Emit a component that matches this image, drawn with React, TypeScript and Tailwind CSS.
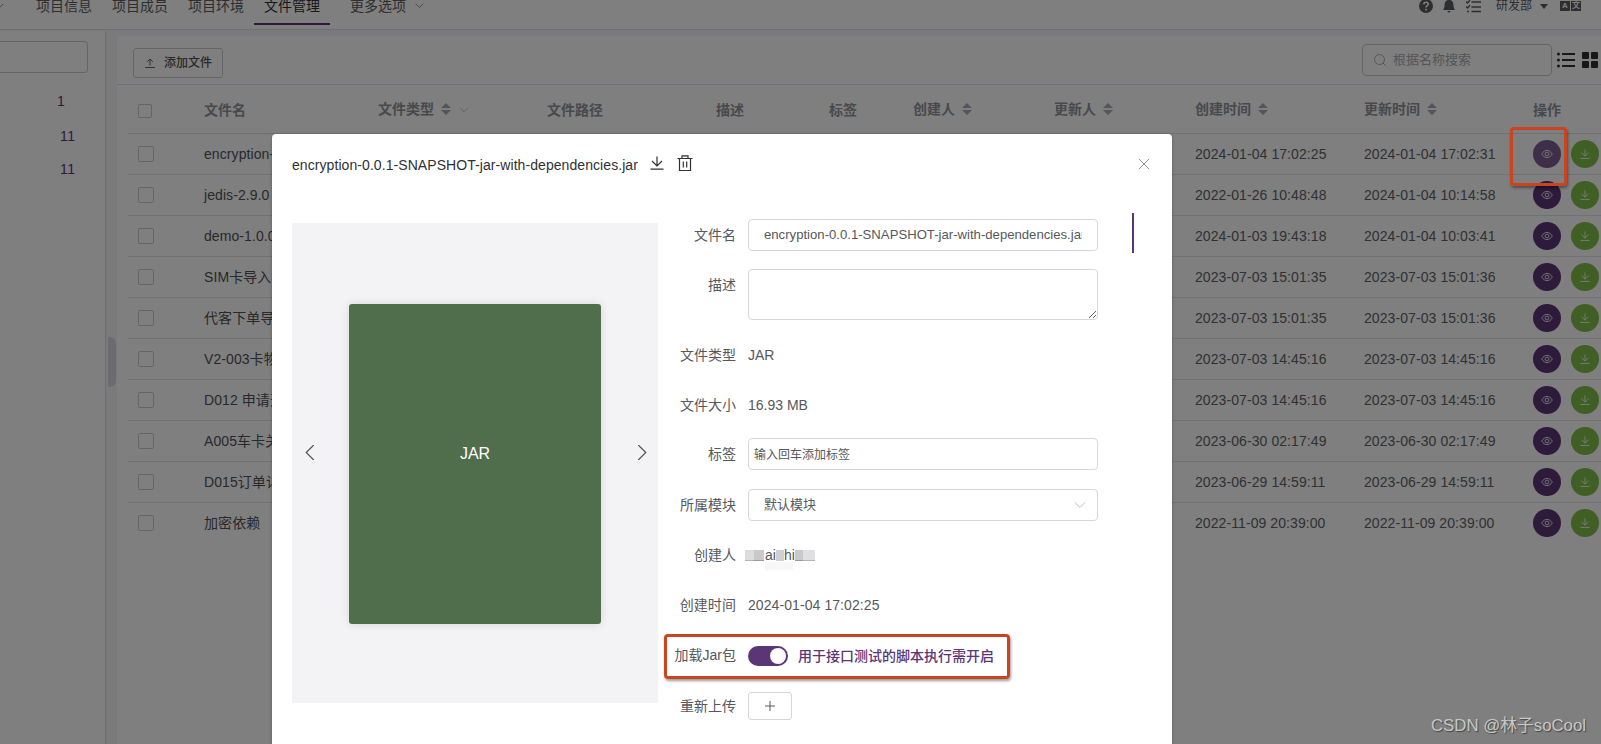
import { useState } from 'react';
import clsx from 'clsx';

const files = [
  { name: 'encryption-0.0.1', created: '2024-01-04 17:02:25', updated: '2024-01-04 17:02:31' },
  { name: 'jedis-2.9.0', created: '2022-01-26 10:48:48', updated: '2024-01-04 10:14:58' },
  { name: 'demo-1.0.0.jar', created: '2024-01-03 19:43:18', updated: '2024-01-04 10:03:41' },
  { name: 'SIM卡导入模板', created: '2023-07-03 15:01:35', updated: '2023-07-03 15:01:36' },
  { name: '代客下单导入', created: '2023-07-03 15:01:35', updated: '2023-07-03 15:01:36' },
  { name: 'V2-003卡物料', created: '2023-07-03 14:45:16', updated: '2023-07-03 14:45:16' },
  { name: 'D012 申请开卡', created: '2023-07-03 14:45:16', updated: '2023-07-03 14:45:16' },
  { name: 'A005车卡关联', created: '2023-06-30 02:17:49', updated: '2023-06-30 02:17:49' },
  { name: 'D015订单详情', created: '2023-06-29 14:59:11', updated: '2023-06-29 14:59:11' },
  { name: '加密依赖', created: '2022-11-09 20:39:00', updated: '2022-11-09 20:39:00' },
];

const columns = [
  { title: '文件名' },
  { title: '文件类型', sort: true, filter: true },
  { title: '文件路径' },
  { title: '描述' },
  { title: '标签' },
  { title: '创建人', sort: true },
  { title: '更新人', sort: true },
  { title: '创建时间', sort: true },
  { title: '更新时间', sort: true },
  { title: '操作' },
];

const gridCols = 'grid grid-cols-[76px_174px_169px_169px_113px_84px_141px_141px_169px_169px_68px] items-center';

function Chevron({ className, dir = 'down' }: { className?: string; dir?: 'down' | 'left' | 'right' }) {
  const d = { down: 'M1 4l6 6 6-6', left: 'M10 0L3 7l7 7', right: 'M4 0l7 7-7 7' }[dir];
  return (
    <svg viewBox="0 0 14 14" className={className} fill="none" stroke="currentColor" strokeWidth="1.1">
      <path d={d} />
    </svg>
  );
}

function DownloadIcon({ className }: { className?: string }) {
  return (
    <svg viewBox="0 0 14 14" className={className} fill="none" stroke="currentColor" strokeWidth="1.2">
      <path d="M7 0.5v9.2M2 5l5 5 5-5M0.5 13.2h13" />
    </svg>
  );
}

function EyeIcon() {
  return (
    <svg viewBox="0 0 14 10" className="h-2.5 w-3" fill="none" stroke="currentColor">
      <path d="M0.8 5C2.6 2.2 4.6 0.8 7 0.8S11.4 2.2 13.2 5C11.4 7.8 9.4 9.2 7 9.2S2.6 7.8 0.8 5z" />
      <circle cx="7" cy="5" r="2.2" />
    </svg>
  );
}

function SortCaret() {
  return (
    <svg viewBox="0 0 10 12" className="ml-[7px] h-3 w-2.5 text-[#a8abb4]" fill="currentColor">
      <path d="M5 0l5 5H0zM5 12l5-5H0z" />
    </svg>
  );
}

function NavBar() {
  const tabs = ['项目信息', '项目成员', '项目环境', '文件管理'];
  return (
    <div className="relative flex h-[30px] shrink-0 border-b border-[#dcdfe6] bg-white text-sm text-[#5a5c60]">
      <Chevron className="absolute -left-1.5 top-px h-2.5 w-2.5 text-[#707278]" />
      <div className="flex pl-[26px]">
        {tabs.map((tab) => (
          <div
            key={tab}
            className={clsx(
              'h-[25px] w-[76px] text-center leading-[13px]',
              tab === '文件管理' && 'border-b-2 border-[#5c3577] text-[#303133]'
            )}
          >
            {tab}
          </div>
        ))}
        <div className="ml-5 leading-[13px]">更多选项</div>
        <Chevron className="ml-[9px] mt-px h-[9px] w-[9px] text-[#707278]" />
      </div>
      <div className="ml-auto flex h-3 items-center pr-5 text-[#5a5c60]">
        <svg viewBox="0 0 14 14" className="h-3.5 w-3.5">
          <circle cx="7" cy="7" r="7" fill="currentColor" />
          <path d="M4.8 5.4C4.9 2.4 9.4 2.6 9.2 5.2 9.1 6.6 7 6.8 7 8.5M7 9.7v1.7" fill="none" stroke="#fff" strokeWidth="1.6" />
        </svg>
        <svg viewBox="0 0 12 14" className="ml-2.5 h-3.5 w-3" fill="currentColor">
          <path d="M6 0a1 1 0 011 1c2 .5 3.4 2 3.4 4.5 0 2.8.6 4 1.6 5.5H0C1 9.5 1.6 8.3 1.6 5.5 1.6 3 3 1.5 5 1a1 1 0 011-1zM4.5 12h3a1.5 1.5 0 01-3 0z" />
        </svg>
        <svg viewBox="0 0 15 13" className="ml-[11px] h-[13px] w-[15px]" fill="none" stroke="currentColor" strokeWidth="1.5">
          <path d="M5.5 2H15M5.5 7H15M5.5 11.5H15M0 1.5L1.5 3 4 0.3M0 6.5L1.5 8 4 5.3M1 11.5h2" />
        </svg>
        <span className="ml-[15px] text-xs">研发部</span>
        <svg viewBox="0 0 8 5" className="ml-2 h-[5px] w-2" fill="currentColor">
          <path d="M0 0h8L4 5z" />
        </svg>
        <div className="ml-3 flex gap-px text-[8px] font-bold leading-[10px] text-white">
          <span className="w-[10px] bg-[#5a5c60] text-center">A</span>
          <span className="w-[10px] bg-[#5a5c60] text-center">文</span>
        </div>
      </div>
    </div>
  );
}

function Sidebar() {
  return (
    <div className="mt-px w-[106px] shrink-0 border-r border-[#dcdfe6] bg-white">
      <div className="mt-2.5 h-8 w-[88px] rounded-r border border-l-0 border-[#c8cbd2]" />
      <div className="flex flex-col text-sm text-[#5c3577]">
        <span className="mt-[18px] pl-[57px]">1</span>
        <span className="mt-[15px] pl-[60px] tracking-[0.5px]">11</span>
        <span className="mt-[13px] pl-[60px] tracking-[0.5px]">11</span>
      </div>
    </div>
  );
}

function FileTable() {
  return (
    <div className="ml-[11px]">
      <div className={clsx(gridCols, 'h-[49px] border-b border-[#dfe2ea] text-sm font-bold text-[#909399]')}>
        <span className="ml-2.5 mt-1 h-3.5 w-3.5 rounded-[2px] border border-[#c8cbd2]" />
        {columns.map((col) => (
          <div key={col.title} className={clsx('flex items-center whitespace-nowrap', !col.sort && 'pt-0.5')}>
            {col.title}
            {col.sort && <SortCaret />}
            {col.filter && <Chevron className="ml-[9px] mt-0.5 h-2 w-2" />}
          </div>
        ))}
      </div>
      {files.map((file, index) => (
        <div
          key={index}
          className={clsx(
            gridCols,
            'h-[41px] border-b text-sm tracking-[0.08px] text-[#606266]',
            index < files.length - 1 ? 'border-[#e2e4ea]' : 'border-transparent'
          )}
        >
          <span className="ml-2.5 h-4 w-4 rounded-[2px] border border-[#c8cbd2]" />
          <span className="col-span-7 whitespace-nowrap text-[#505256]">{file.name}</span>
          <span className="whitespace-nowrap">{file.created}</span>
          <span className="whitespace-nowrap">{file.updated}</span>
          <div className="flex gap-2.5 text-white">
            <button
              className={clsx(
                'flex h-7 w-7 shrink-0 items-center justify-center rounded-full',
                index === 0 ? 'bg-[#7d5d92]' : 'bg-[#5c3577]'
              )}
            >
              <EyeIcon />
            </button>
            <button className="flex h-7 w-7 shrink-0 items-center justify-center rounded-full bg-[#7ebe48]">
              <DownloadIcon className="h-2.5 w-2.5" />
            </button>
          </div>
        </div>
      ))}
    </div>
  );
}

function FilePanel() {
  return (
    <div className="mt-1.5 w-[1484px] shrink-0 rounded-tl bg-white">
      <div className="flex h-[49px] items-center border-b border-[#dcdfee] pl-4">
        <button className="mt-1.5 flex h-[30px] w-[90px] items-center rounded-[3px] border border-[#c8cbd2] pl-[11px] text-xs text-[#505256]">
          <svg viewBox="0 0 10 10" className="mr-[9px] h-2.5 w-2.5" fill="none" stroke="currentColor" strokeWidth="0.9">
            <path d="M5 7.5V1M2.2 3.800L5 1l2.800 2.800M0 9.500h10" />
          </svg>
          <span className="font-medium">添加文件</span>
        </button>
        <div className="ml-auto mr-[5px] flex h-8 w-[190px] items-center rounded border border-[#c8cbd2] pl-[11px] text-[13px] text-[#a8abb2]">
          <svg viewBox="0 0 12 12" className="mr-[7px] h-3 w-3" fill="none" stroke="currentColor">
            <circle cx="5.5" cy="5.5" r="5" />
            <path d="M9 9l2.5 2.5" />
          </svg>
          根据名称搜索
        </div>
        <svg viewBox="0 0 18 16" className="h-4 w-[18px] text-[#303133]" fill="currentColor">
          <path d="M5 1h13v2H5zM5 7h13v2H5zM5 13h13v2H5z" />
          <circle cx="1.5" cy="2" r="1.5" />
          <circle cx="1.5" cy="8" r="1.5" />
          <circle cx="1.5" cy="14" r="1.5" />
        </svg>
        <div className="ml-[7px] mr-[3px] grid grid-cols-2 gap-0.5">
          {[0, 1, 2, 3].map((i) => (
            <span key={i} className="h-[7px] w-[7px] rounded-[1px] bg-[#303133]" />
          ))}
        </div>
      </div>
      <FileTable />
    </div>
  );
}

function FormRow({ label, className, children }: { label: string; className?: string; children: React.ReactNode }) {
  return (
    <div className={clsx('flex', className)}>
      <span className="w-[90px] shrink-0 pr-3 text-right leading-8">{label}</span>
      <div className="leading-8">{children}</div>
    </div>
  );
}

// 打码后的创建人
function MaskedName() {
  return (
    <div className="relative -ml-[3px] flex h-[11px] items-end text-sm leading-[11px]">
      <span className="h-[11px] w-[9px] border-b border-[#b4b4b8] bg-[#dcdcdf]" />
      <span className="h-[11px] w-2.5 border-b border-[#9a9a9e] bg-[#c9c9cc]" />
      <span className="pl-px">ai</span>
      <span className="h-[11px] w-2 bg-[#cfd0d4]" />
      <span>hi</span>
      <span className="h-[11px] w-2 border-b border-[#9a9a9e] bg-[#c9c9cc]" />
      <span className="h-[11px] w-3 border-b border-[#b4b4b8] bg-[#e0e0e3]" />
      <span className="absolute left-5 top-3 h-2 w-7 bg-[#f7f7f8]" />
    </div>
  );
}

function FileDialog() {
  const [loadJar, setLoadJar] = useState(true);
  return (
    <div className="absolute left-[272px] top-[134px] h-[620px] w-[900px] rounded-sm bg-white px-5 shadow-[0_1px_3px_rgba(0,0,0,0.3)]">
      <div className="flex h-[62px] items-center text-sm text-[#303133]">
        <span className="tracking-[0.07px]">encryption-0.0.1-SNAPSHOT-jar-with-dependencies.jar</span>
        <DownloadIcon className="mb-1 ml-3 h-3.5 w-3.5" />
        <svg viewBox="0 0 16 16" className="mb-1 ml-[13px] h-4 w-4" fill="none" stroke="currentColor" strokeWidth="1.2">
          <path d="M0.5 3.5h15M2.5 3.5v12h11v-12M5 3V0.8h6V3M6.3 6.5v6M9.700 6.500v6" />
        </svg>
        <svg viewBox="0 0 10 10" className="mb-[3px] ml-auto mr-[3px] h-2.5 w-2.5 text-[#909399]" fill="none" stroke="currentColor">
          <path d="M0 0l10 10M10 0L0 10" />
        </svg>
      </div>

      <div className="flex">
        {/* 预览 */}
        <div className="mt-[27px] flex h-[480px] w-[366px] shrink-0 items-center justify-between bg-[#f3f3f6] pl-[11px] pr-[9px] text-[#505256]">
          <Chevron dir="left" className="-mt-[22px] h-[15px] w-[15px]" />
          <div className="-ml-0.5 mt-0.5 flex h-80 w-[252px] items-center justify-center rounded-[3px] bg-[#506e4c] pb-[21px] text-white shadow-[0_0_10px_rgba(0,0,0,0.12)]">
            JAR
          </div>
          <Chevron dir="right" className="-mt-[22px] h-[15px] w-[15px]" />
        </div>

        {/* 基本信息 */}
        <div className="mt-[23px] flex w-[440px] shrink-0 flex-col text-sm text-[#56585c]">
          <FormRow label="文件名" className="h-8">
            <div className="flex h-8 w-[350px] items-center rounded border border-[#d5d6e0] px-[15px] text-[13.15px]">
              <span className="overflow-hidden whitespace-nowrap">encryption-0.0.1-SNAPSHOT-jar-with-dependencies.jar</span>
            </div>
          </FormRow>
          <FormRow label="描述" className="mt-[18px] h-[51px]">
            <textarea className="block h-[51px] w-[350px] rounded border border-[#d5d6e0]" />
          </FormRow>
          <FormRow label="文件类型" className="mt-[19px] h-8">JAR</FormRow>
          <FormRow label="文件大小" className="mt-[18px] h-8">16.93 MB</FormRow>
          <FormRow label="标签" className="mt-[17px] h-8">
            <div className="flex h-8 w-[350px] items-center rounded border border-[#d5d6e0] px-[5px] pt-px text-xs">输入回车添加标签</div>
          </FormRow>
          <FormRow label="所属模块" className="mt-[19px] h-8">
            <div className="flex h-8 w-[350px] items-center justify-between rounded border border-[#d5d6e0] pl-[15px] pr-[11px] text-[13px]">
              默认模块
              <Chevron className="h-3 w-3 text-[#b8bac4]" />
            </div>
          </FormRow>
          <FormRow label="创建人" className="mt-[18px] h-8">
            <div className="flex h-8 items-center">
              <MaskedName />
            </div>
          </FormRow>
          <FormRow label="创建时间" className="mt-[18px] h-8 tracking-[0.08px]">2024-01-04 17:02:25</FormRow>
          <div className="relative mt-[18px] h-[34px]">
            <FormRow label="加载Jar包">
              <div className="flex h-[34px] items-center">
                <button
                  onClick={() => setLoadJar(!loadJar)}
                  className={clsx(
                    'flex h-5 w-10 items-center rounded-full px-0.5',
                    loadJar ? 'justify-end bg-[#5c3577]' : 'bg-gray-300'
                  )}
                >
                  <span className="h-4 w-4 rounded-full bg-white" />
                </button>
                <span className="ml-2.5 font-medium text-[#5c3577]">用于接口测试的脚本执行需开启</span>
              </div>
            </FormRow>
            <div className="absolute -top-[5px] left-1.5 h-[45px] w-[346px] rounded border-[3px] border-[#c9441f] shadow-[1px_2px_3px_rgba(0,0,0,0.4)]" />
          </div>
          <FormRow label="重新上传" className="mt-[17px]">
            <button className="mt-0.5 flex h-7 w-11 items-center justify-center rounded-[3px] border border-[#d5d6e0]">
              <svg viewBox="0 0 10 10" className="h-2.5 w-2.5" stroke="currentColor">
                <path d="M5 0v10M0 5h10" />
              </svg>
            </button>
          </FormRow>
        </div>
        <div className="ml-[34px] mt-[17px] h-10 w-0.5 shrink-0 bg-[#5c3577]" />
      </div>
    </div>
  );
}

export default function App() {
  return (
    <div className="relative flex h-[744px] w-[1601px] flex-col overflow-hidden bg-[#f4f5f8] font-['Liberation_Sans','Noto_Sans_CJK_SC',sans-serif]">
      <NavBar />
      <div className="flex flex-1">
        <Sidebar />
        <div className="flex w-[11px] shrink-0 justify-end">
          <div className="mr-px mt-[307px] h-[50px] w-2 rounded-r-md bg-[#d5d8de]" />
        </div>
        <FilePanel />
      </div>

      {/* 遮罩与弹窗 */}
      <div className="absolute inset-0 bg-black/50" />
      <FileDialog />

      <div className="absolute left-[1510px] top-[127px] h-[59px] w-[57px] rounded border-[3px] border-[#c9441f] shadow-[1px_2px_3px_rgba(0,0,0,0.4)]" />
      <div className="absolute bottom-1.5 right-[15px] text-[16.8px] text-[#c8c8c8] [text-shadow:1px_1px_1px_#444]">CSDN @林子soCool</div>
    </div>
  );
}
